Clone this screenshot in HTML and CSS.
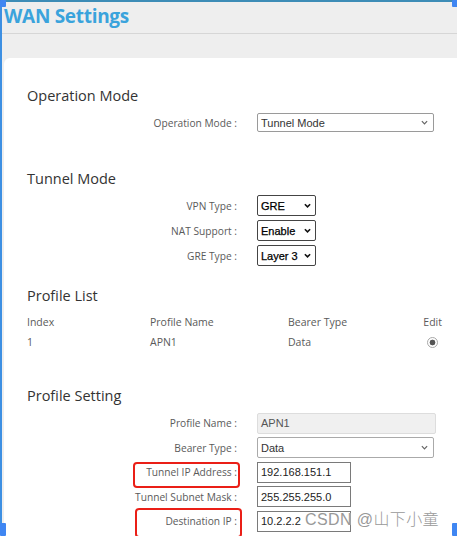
FILE: index.html
```html
<!DOCTYPE html>
<html>
<head>
<meta charset="utf-8">
<link rel="stylesheet" href="styles.css">
</head>
<body>
<div class="page">
  <div class="header"><h1 class="title">WAN Settings</h1></div>
  <div class="band"></div>
  <div class="card">
    <h2 class="section-title first">Operation Mode</h2>
    <div class="row">
      <span class="label">Operation Mode :</span>
      <div class="select select-wide"><span>Tunnel Mode</span><svg class="chev" viewBox="0 0 8 5"><path d="M1 1l3 3 3-3" /></svg></div>
    </div>

    <h2 class="section-title">Tunnel Mode</h2>
    <div class="row">
      <span class="label">VPN Type :</span>
      <div class="select select-small"><span>GRE</span><svg class="chev dark" viewBox="0 0 8 5"><path d="M1 1l3 3 3-3" /></svg></div>
    </div>
    <div class="row">
      <span class="label">NAT Support :</span>
      <div class="select select-small"><span>Enable</span><svg class="chev dark" viewBox="0 0 8 5"><path d="M1 1l3 3 3-3" /></svg></div>
    </div>
    <div class="row">
      <span class="label">GRE Type :</span>
      <div class="select select-small"><span>Layer 3</span><svg class="chev dark" viewBox="0 0 8 5"><path d="M1 1l3 3 3-3" /></svg></div>
    </div>

    <h2 class="section-title tight">Profile List</h2>
    <div class="table">
      <span>Index</span><span>Profile Name</span><span>Bearer Type</span><span class="edit">Edit</span>
      <span>1</span><span>APN1</span><span>Data</span><span class="edit"><span class="radio"></span></span>
    </div>

    <h2 class="section-title">Profile Setting</h2>
    <div class="row row-b">
      <span class="label">Profile Name :</span>
      <div class="input input-disabled">APN1</div>
    </div>
    <div class="row row-b">
      <span class="label">Bearer Type :</span>
      <div class="select select-wide2"><span>Data</span><svg class="chev" viewBox="0 0 8 5"><path d="M1 1l3 3 3-3" /></svg></div>
    </div>
    <div class="row row-b">
      <span class="label">Tunnel IP Address :</span>
      <div class="input">192.168.151.1</div>
    </div>
    <div class="row row-b">
      <span class="label">Tunnel Subnet Mask :</span>
      <div class="input">255.255.255.0</div>
    </div>
    <div class="row row-b">
      <span class="label">Destination IP :</span>
      <div class="input">10.2.2.2</div>
    </div>
  </div>

  <div class="mark mark-1"></div>
  <div class="mark mark-2"></div>
  <div class="watermark">CSDN @山下小童</div>

  <div class="frame-left"></div>
  <div class="frame-top"></div>
  <div class="handle h-tl"></div>
  <div class="handle h-tr"></div>
  <div class="handle h-bl"></div>
  <div class="handle h-br"></div>
</div>
</body>
</html>
```
FILE: styles.css
```css
html, body {
  margin: 0;
  padding: 0;
}
body {
  background: #eeeeee;
  font-family: "Open Sans", "Noto Sans", sans-serif;
}
.page {
  position: relative;
  width: 457px;
  height: 536px;
  overflow: hidden;
  background: #eeeeee;
}
.header {
  height: 34px;
  border-bottom: 1px solid #d6d6d6;
  padding-left: 4px;
  box-sizing: border-box;
}
.title {
  margin: 0;
  padding-top: 3px;
  font-size: 19px;
  line-height: 26px;
  font-weight: 700;
  color: #3aa3dc;
  letter-spacing: -0.3px;
}
.band {
  height: 24px;
}
.card {
  margin-left: 4px;
  background: #ffffff;
  border-radius: 6px 0 0 0;
  padding-top: 26px;
  height: 500px;
}
.section-title {
  margin: 32px 0 2px 23px;
  font-size: 14.5px;
  line-height: 24px;
  font-weight: 400;
  color: #333333;
}
.section-title.first {
  margin-top: 0;
}
.section-title.tight {
  margin-top: 16px;
  margin-bottom: 4px;
}
.row {
  display: flex;
  align-items: center;
  height: 25px;
}
.row-b {
  height: 24.5px;
}
.section-title + .row-b {
  margin-top: 3px;
}
.label {
  width: 233px;
  text-align: right;
  font-size: 10.2px;
  color: #5a5a5a;
  margin-right: 20px;
  white-space: nowrap;
}
.select {
  box-sizing: border-box;
  display: flex;
  align-items: center;
  justify-content: space-between;
  background: #fff;
  border: 1px solid #9a9a9a;
  border-radius: 2px;
  font-family: "Liberation Sans", Arial, sans-serif;
  font-size: 11px;
  color: #333;
  padding: 0 5px 0 3px;
}
.select-wide {
  width: 177px;
  height: 19px;
}
.select-wide2 {
  width: 177px;
  height: 21px;
  border-color: #aaaaaa;
}
.select-small {
  width: 59px;
  height: 21px;
  border-color: #444;
  color: #000;
  font-size: 11px;
  padding-right: 4px;
  -webkit-text-stroke: 0.25px #000;
}
.chev {
  width: 7px;
  height: 5px;
  fill: none;
  stroke: #666;
  stroke-width: 1.4;
}
.chev.dark {
  stroke: #111;
  stroke-width: 1.8;
}
.input {
  box-sizing: border-box;
  width: 94px;
  height: 21px;
  border: 1px solid #7a7a7a;
  background: #fff;
  font-family: "Liberation Sans", Arial, sans-serif;
  font-size: 11px;
  color: #222;
  padding-left: 3px;
  display: flex;
  align-items: center;
}
.input-disabled {
  width: 179px;
  background: #f0f0f0;
  border-color: #dddddd;
  border-radius: 2px;
  color: #555;
}
.table {
  display: grid;
  grid-template-columns: 123px 138px 1fr auto;
  grid-auto-rows: 20px;
  align-items: center;
  padding: 0 15px 0 23px;
  font-size: 10.5px;
  color: #5a5a5a;
}
.table .edit {
  text-align: center;
  display: flex;
  justify-content: center;
}
.radio {
  box-sizing: border-box;
  width: 11px;
  height: 11px;
  border-radius: 50%;
  border: 1px solid #a8a8a8;
  background: radial-gradient(circle, #555 0, #555 2.6px, #fff 3.2px);
}
.mark {
  position: absolute;
  border: 2.5px solid #ea1f17;
  border-radius: 4px;
  box-sizing: border-box;
}
.mark-1 {
  left: 133px;
  top: 462px;
  width: 107px;
  height: 26px;
}
.mark-2 {
  left: 135px;
  top: 508px;
  width: 107px;
  height: 30px;
}
.watermark {
  position: absolute;
  left: 305px;
  top: 506px;
  font-family: "Liberation Sans", "Noto Sans CJK SC", sans-serif;
  font-size: 16px;
  font-weight: 300;
  color: #999999;
  letter-spacing: 0.4px;
  white-space: nowrap;
  text-shadow: 0 0 1px #fff;
}
.frame-left {
  position: absolute;
  left: 0;
  top: 0;
  width: 2px;
  height: 524px;
  background: #3d8fe2;
}
.frame-top {
  position: absolute;
  left: 0;
  top: 0;
  width: 453px;
  height: 2px;
  background: #3d8cb6;
}
.handle {
  position: absolute;
  width: 6px;
  height: 7px;
  background: #3f86f2;
  border-radius: 1px;
}
.h-tl { left: 0; top: 0; }
.h-tr { left: 452px; top: 0; }
.h-bl { left: 0; top: 523px; height: 13px; }
.h-br { left: 452px; top: 523px; height: 13px; }
```
